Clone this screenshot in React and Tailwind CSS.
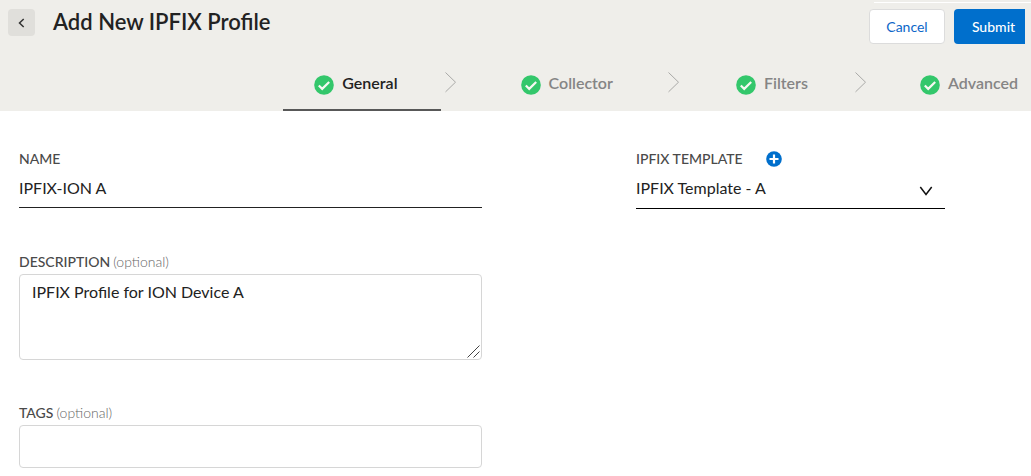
import { useState } from 'react'

const STEPS = [
  { id: 'general', label: 'General', spacing: 'pl-[31px] pr-[43px]', chevron: 'ml-1' },
  { id: 'collector', label: 'Collector', spacing: 'pl-16 pr-[43px]', chevron: 'ml-3' },
  { id: 'filters', label: 'Filters', spacing: 'pl-14 pr-[43px]', chevron: 'ml-1' },
  { id: 'advanced', label: 'Advanced', spacing: 'pl-[53px] pr-[13px]' },
]

const TEMPLATES = ['IPFIX Template - A', 'IPFIX Template - B']

function CheckIcon() {
  return (
    <svg className="size-5 shrink-0 mt-[5px]" viewBox="0 0 20 20" fill="none" aria-hidden="true">
      <circle cx="10" cy="10" r="9.8" fill="#33c76b" />
      <path d="M4.8 10.5l3.4 3.4 7-6.9" stroke="#f6f8f2" strokeWidth="2.2" />
    </svg>
  )
}

function StepChevron({ className }) {
  return (
    <svg className={`w-3 h-[22px] shrink-0 mb-1.5 ${className}`} viewBox="0 0 12 22" fill="none" aria-hidden="true">
      <path d="M.5 1.5l10 9.7-10 9.7" stroke="#a9a9a7" />
    </svg>
  )
}

function Label({ htmlFor, optional, children }) {
  return (
    <label htmlFor={htmlFor} className="block text-sm leading-5 font-medium text-[#4a4a4a]">
      {children}
      {optional && <span className="ml-[3px] font-light text-[#666]">(optional)</span>}
    </label>
  )
}

export default function AddIpfixProfile() {
  const [step, setStep] = useState('general')
  const [form, setForm] = useState({
    name: 'IPFIX-ION A',
    template: TEMPLATES[0],
    description: 'IPFIX Profile for ION Device A',
    tags: '',
  })

  function handleChange(e) {
    const { name, value } = e.target
    setForm(f => ({ ...f, [name]: value }))
  }

  return (
    <div className="bg-white font-['Lato',sans-serif] text-[#222]">
      <header className="bg-[#efeeea]">
        <div className="flex justify-end h-[9px] pt-[2px]">
          <div className="w-[157px] h-px bg-white" />
        </div>
        <div className="flex items-start pl-2 pr-[6px]">
          <button type="button" aria-label="Back" className="flex items-center justify-center size-[27px] rounded bg-[#e0dfdb]">
            <svg className="w-[7px] h-[10px]" viewBox="0 0 7 10" fill="none" aria-hidden="true">
              <path d="M5.7 1L1.5 5l4.2 4" stroke="#333" strokeWidth="1.5" />
            </svg>
          </button>
          <h1 className="ml-[18px] text-[22px] leading-[26px] font-semibold">Add New IPFIX Profile</h1>
          <div className="flex gap-[9px] ml-auto">
            <button type="button" className="w-[76px] h-[35px] rounded border border-[#dcdcdc] bg-white text-sm text-[#0b66c8]">
              Cancel
            </button>
            <button type="submit" form="profile" className="w-[71px] h-[35px] pl-2 rounded-l bg-[#006fcc] text-sm font-medium text-white">
              Submit
            </button>
          </div>
        </div>

        <nav className="flex justify-end h-[67px] pt-[14px]">
          {STEPS.map(s => (
            <div key={s.id} className="flex items-center">
              <button
                type="button"
                onClick={() => setStep(s.id)}
                className={`flex items-center gap-2 h-[53px] pb-0.5 border-b-2 text-base font-semibold ${s.spacing} ${step === s.id ? 'border-[#585858] text-[#222]' : 'border-transparent text-[#858585]'}`}
              >
                <CheckIcon />
                {s.label}
              </button>
              {s.chevron && <StepChevron className={s.chevron} />}
            </div>
          ))}
        </nav>
      </header>

      <form id="profile" onSubmit={e => e.preventDefault()}
        className="grid grid-cols-[463fr_309fr] gap-x-[154px] pl-[19px] pr-[86px] pt-[38px] pb-2">
        <div>
          <Label htmlFor="name">NAME</Label>
          <input id="name" name="name" value={form.name} onChange={handleChange}
            className="block w-full h-[39px] pb-0.5 border-b border-[#222] text-base outline-none" />
        </div>

        <div>
          <div className="flex items-center gap-[23px]">
            <Label htmlFor="template">IPFIX TEMPLATE</Label>
            <button type="button" aria-label="Add template">
              <svg className="size-4" viewBox="0 0 16 16" fill="none" aria-hidden="true">
                <circle cx="8" cy="8" r="7.8" fill="#006fcc" />
                <path d="M8 3.5v9M3.5 8h9" stroke="#fff" strokeWidth="2.2" />
              </svg>
            </button>
          </div>
          <div className="grid items-center">
            <select id="template" name="template" value={form.template} onChange={handleChange}
              className="col-start-1 row-start-1 w-full h-10 pb-0.5 border-b border-black appearance-none text-base outline-none">
              {TEMPLATES.map(t => <option key={t}>{t}</option>)}
            </select>
            <svg className="col-start-1 row-start-1 justify-self-end w-[14px] h-[10px] mr-3 mt-[3px] pointer-events-none" viewBox="0 0 14 10" fill="none" aria-hidden="true">
              <path d="M1.3 1l5.7 7.5L12.7 1" stroke="#111" strokeWidth="1.5" />
            </svg>
          </div>
        </div>

        <div className="col-start-1 mt-[43px]">
          <Label htmlFor="description" optional>DESCRIPTION</Label>
          <div className="grid mt-[2px]">
            <textarea id="description" name="description" value={form.description} onChange={handleChange}
              className="col-start-1 row-start-1 w-full h-[86px] px-3 py-[5px] rounded border border-[#d6d6d6] text-base resize-none outline-none" />
            {/* corner grip */}
            <svg className="col-start-1 row-start-1 self-end justify-self-end size-[13px] mr-0.5 mb-0.5 pointer-events-none" viewBox="0 0 13 13" fill="none" aria-hidden="true">
              <path d="M.5 12.5l12-12M6.5 12.5l6-6" stroke="#444" />
            </svg>
          </div>
        </div>

        <div className="col-start-1 mt-[43px]">
          <Label htmlFor="tags" optional>TAGS</Label>
          <input id="tags" name="tags" value={form.tags} onChange={handleChange}
            className="block w-full h-[43px] mt-[2px] px-3 rounded border border-[#d6d6d6] text-base outline-none" />
        </div>
      </form>
    </div>
  )
}
